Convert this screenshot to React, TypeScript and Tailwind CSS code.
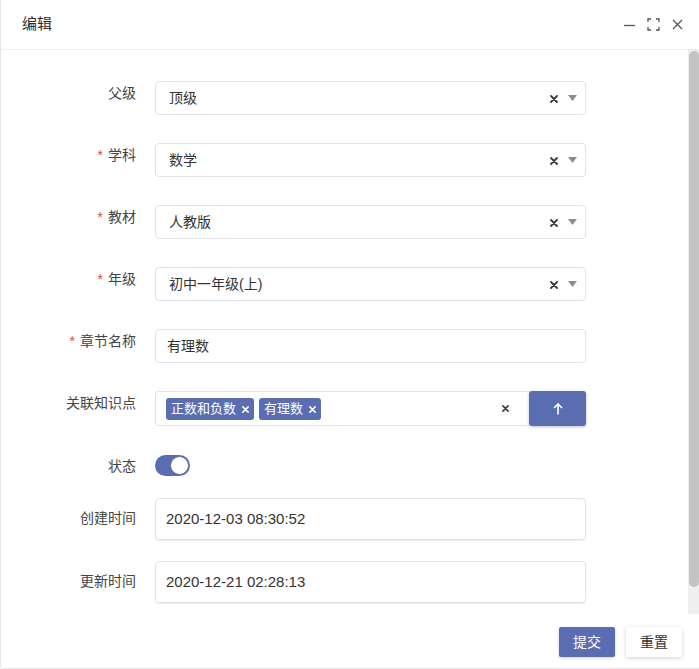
import type { ReactNode } from 'react';

const PRIMARY = 'bg-[#5b6db1]';

function ClearX({ className = '' }: { className?: string }) {
  return (
    <svg width="8" height="8" viewBox="0 0 8 8" className={className} aria-hidden>
      <path d="M1 1 L7 7 M7 1 L1 7" stroke="currentColor" strokeWidth="1.8" strokeLinecap="round" />
    </svg>
  );
}

function Caret() {
  return (
    <svg width="9" height="6" viewBox="0 0 9 6" aria-hidden>
      <path d="M0 0 H9 L4.5 6 Z" fill="#8c8c8c" />
    </svg>
  );
}

function Label({ children, required, pt }: { children: ReactNode; required?: boolean; pt: string }) {
  return (
    <div className={`w-[135px] shrink-0 text-right text-[14px] leading-[20px] text-[#454545] ${pt}`}>
      {required && <span className="mr-[5px] text-[#e0463f]">*</span>}
      {children}
    </div>
  );
}

function SelectBox({ value }: { value: string }) {
  return (
    <div className="flex h-[34px] w-[431px] items-center rounded-[4px] border border-[#dfe3e8] pl-[13px] pr-[8px] text-[14px] text-[#333]">
      <span className="flex-1">{value}</span>
      <ClearX className="mr-[10px] mt-[2px] text-[#3a3a3a]" />
      <Caret />
    </div>
  );
}

function Tag({ text }: { text: string }) {
  return (
    <span className={`flex h-[22px] items-center gap-[6px] rounded-[3px] ${PRIMARY} px-[5px] text-[13px] text-white`}>
      {text}
      <ClearX className="mt-[1px] h-[7px] w-[7px]" />
    </span>
  );
}

function DateBox({ value }: { value: string }) {
  return (
    <div className="flex h-[42px] w-[431px] items-center rounded-[4px] border border-[#dfe3e8] px-[10px] text-[15px] text-[#333] shadow-[0_1px_1px_rgba(0,0,0,0.08)]">
      {value}
    </div>
  );
}

export default function App() {
  return (
    <div className="flex h-[669px] w-[699px] flex-col overflow-hidden rounded-bl-[4px] border-b border-l border-[#e4e4e4] bg-white font-['Liberation_Sans','Noto_Sans_CJK_SC',sans-serif]">
      <div className="flex h-[50px] shrink-0 items-center border-b border-[#eeeeee] pl-[21px] pr-[15px]">
        <span className="flex-1 text-[15px] text-[#2b2b2b]">编辑</span>
        <div className="flex items-center gap-[11px] text-[#555]">
          <svg width="13" height="13" viewBox="0 0 13 13" aria-hidden>
            <path d="M1 7.5 H12" stroke="currentColor" strokeWidth="1.3" />
          </svg>
          <svg width="13" height="13" viewBox="0 0 13 13" aria-hidden>
            <path
              d="M1 4 V1 H4 M9 1 H12 V4 M12 9 V12 H9 M4 12 H1 V9"
              fill="none"
              stroke="currentColor"
              strokeWidth="1.3"
            />
          </svg>
          <svg width="13" height="13" viewBox="0 0 13 13" aria-hidden>
            <path d="M2 2 L11 11 M11 2 L2 11" stroke="currentColor" strokeWidth="1.3" />
          </svg>
        </div>
      </div>

      <div className="flex h-[564px] shrink-0">
        <div className="flex flex-1 flex-col overflow-hidden pt-[31px]">
          <div className="flex gap-[19px]">
            <Label pt="pt-[2px]">父级</Label>
            <SelectBox value="顶级" />
          </div>
          <div className="mt-[28px] flex gap-[19px]">
            <Label pt="pt-[2px]" required>学科</Label>
            <SelectBox value="数学" />
          </div>
          <div className="mt-[28px] flex gap-[19px]">
            <Label pt="pt-[2px]" required>教材</Label>
            <SelectBox value="人教版" />
          </div>
          <div className="mt-[28px] flex gap-[19px]">
            <Label pt="pt-[2px]" required>年级</Label>
            <SelectBox value="初中一年级(上)" />
          </div>
          <div className="mt-[28px] flex gap-[19px]">
            <Label pt="pt-[2px]" required>章节名称</Label>
            <div className="flex h-[34px] w-[431px] items-center rounded-[4px] border border-[#dfe3e8] px-[11px] text-[14px] text-[#333]">
              有理数
            </div>
          </div>
          <div className="mt-[28px] flex gap-[19px]">
            <Label pt="pt-[2px]">关联知识点</Label>
            <div className="flex w-[431px]">
              <div className="flex h-[35px] flex-1 items-center gap-[5px] rounded-l-[4px] border border-r-0 border-[#dfe3e8] pl-[10px] pr-[20px]">
                <Tag text="正数和负数" />
                <Tag text="有理数" />
                <span className="flex-1" />
                <ClearX className="h-[7px] w-[7px] text-[#3a3a3a]" />
              </div>
              <button
                className={`flex h-[35px] w-[57px] items-center justify-center rounded-[3px] ${PRIMARY} text-white shadow-[0_1px_3px_rgba(0,0,0,0.25)]`}
              >
                <svg width="10" height="12" viewBox="0 0 10 12" aria-hidden>
                  <path d="M5 11.5 V1.5 M1 5 L5 1 L9 5" fill="none" stroke="currentColor" strokeWidth="1.6" />
                </svg>
              </button>
            </div>
          </div>
          <div className="mt-[29px] flex gap-[19px]">
            <Label pt="pt-[1px]">状态</Label>
            <div className={`flex h-[21px] w-[35px] items-center justify-end rounded-full ${PRIMARY} pr-[1px]`}>
              <span className="h-[19px] w-[19px] rounded-full border border-[#5b6db1] bg-white" />
            </div>
          </div>
          <div className="mt-[22px] flex gap-[19px]">
            <Label pt="pt-[10px]">创建时间</Label>
            <DateBox value="2020-12-03 08:30:52" />
          </div>
          <div className="mt-[21px] flex gap-[19px]">
            <Label pt="pt-[10px]">更新时间</Label>
            <DateBox value="2020-12-21 02:28:13" />
          </div>
        </div>
        <div className="flex w-[11px] shrink-0 justify-end bg-[#efefef]">
          <div className="mt-[1px] h-[536px] w-[10px] rounded-full bg-[#c4c4c4]" />
        </div>
      </div>

      <div className="flex flex-1 items-start justify-end gap-[11px] pr-[17px] pt-[13px]">
        <button className={`h-[30px] w-[56px] rounded-[2px] ${PRIMARY} text-[14px] text-white shadow-[0_1px_3px_rgba(0,0,0,0.2)]`}>
          提交
        </button>
        <button className="h-[30px] w-[56px] rounded-[2px] bg-white text-[14px] text-[#333] shadow-[0_1px_4px_rgba(0,0,0,0.18)]">
          重置
        </button>
      </div>
    </div>
  );
}
